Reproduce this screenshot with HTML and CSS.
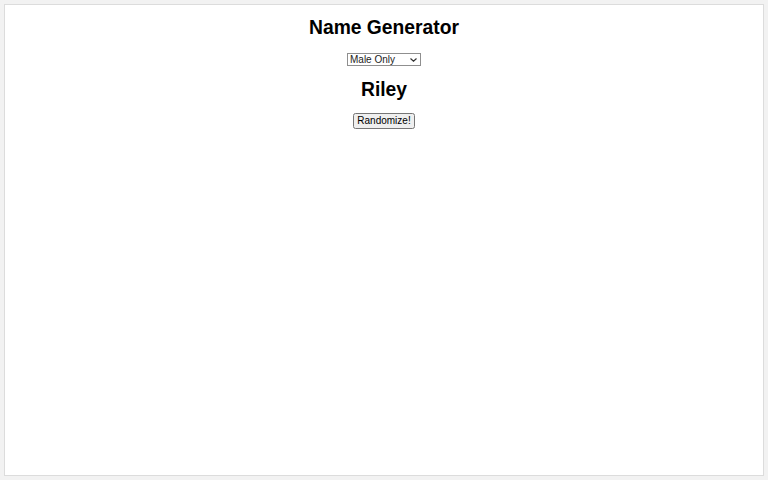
FILE: index.html
```html
<!DOCTYPE html>
<html lang="en">
<head>
    <meta charset="UTF-8">
    <meta name="viewport" content="width=device-width, initial-scale=1.0">
    <title>Name Generator</title>
    <link rel="stylesheet" href="styles.css">
</head>
<body>
    <main class="card">
        <h1 class="title">Name Generator</h1>
        <div class="picker-wrap">
            <select id="gender" class="picker">
                <option>Male Only</option>
                <option>Female Only</option>
                <option>Both</option>
            </select>
            <svg class="chevron" width="7" height="4" viewBox="0 0 7 4">
                <path d="M0.5 0.5 L3.5 3.2 L6.5 0.5" fill="none" stroke="#333" stroke-width="1.2"/>
            </svg>
        </div>
        <h2 id="name" class="name">Riley</h2>
        <button class="roll">Randomize!</button>
    </main>
</body>
</html>
```

FILE: styles.css
```css
html, body {
    height: 100%;
}
body {
    font-family: "Liberation Sans", Arial, sans-serif;
    background-color: #f2f2f2;
    margin: 0;
    padding: 4px;
    box-sizing: border-box;
}
.card {
    height: 100%;
    box-sizing: border-box;
    background: white;
    border: 1px solid #dcdcdc;
    display: flex;
    flex-direction: column;
    align-items: center;
    padding-top: 12px;
}
.title {
    font-size: 19.3px;
    line-height: 22px;
    margin: 0 0 14px;
}
.picker-wrap {
    position: relative;
    display: flex;
}
.picker {
    appearance: none;
    font-family: "Liberation Sans", Arial, sans-serif;
    font-size: 10px;
    line-height: 11px;
    color: #222;
    width: 74px;
    height: 13px;
    padding: 0 0 0 2px;
    border: 1px solid #8f8f8f;
    border-radius: 0;
    background: white;
}
.chevron {
    position: absolute;
    right: 4px;
    top: 5px;
    pointer-events: none;
}
.name {
    font-size: 19.3px;
    line-height: 22px;
    margin: 13px 0 12px;
}
.roll {
    font-family: "Liberation Sans", Arial, sans-serif;
    font-size: 10px;
    line-height: 12px;
    padding: 0 2px;
}
```
